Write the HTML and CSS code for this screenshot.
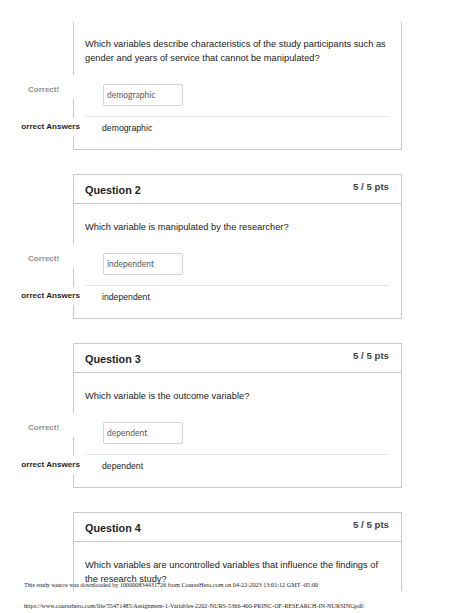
FILE: index.html
```html
<!DOCTYPE html>
<html lang="en">
<head>
  <meta charset="UTF-8" />
  <meta name="viewport" content="width=device-width, initial-scale=1.0" />
  <title>Quiz Results | Assignment 1 Variables</title>
  <link rel="stylesheet" href="styles.css">
</head>
<body>
  <div class="page">
    <div class="sheet">
      <!-- Question 1 (continued from previous page) -->
      <div class="question cont">
        <div class="question-body">
          <p class="question-text">Which variables describe characteristics of the study participants such as gender and years of service that cannot be manipulated?</p>
          <div class="answer">
            <span class="answer-label">Correct!</span>
            <div class="answer-box">demographic</div>
          </div>
          <div class="answer-key">
            <span class="key-label">Correct Answers</span>
            <span class="key-text">demographic</span>
          </div>
        </div>
      </div>

      <!-- Question 2 -->
      <div class="question">
        <div class="question-header">
          <span class="question-name">Question 2</span>
          <span class="question-points">5 / 5 pts</span>
        </div>
        <div class="question-body">
          <p class="question-text">Which variable is manipulated by the researcher?</p>
          <div class="answer">
            <span class="answer-label">Correct!</span>
            <div class="answer-box">independent</div>
          </div>
          <div class="answer-key">
            <span class="key-label">Correct Answers</span>
            <span class="key-text">independent</span>
          </div>
        </div>
      </div>

      <!-- Question 3 -->
      <div class="question">
        <div class="question-header">
          <span class="question-name">Question 3</span>
          <span class="question-points">5 / 5 pts</span>
        </div>
        <div class="question-body">
          <p class="question-text">Which variable is the outcome variable?</p>
          <div class="answer">
            <span class="answer-label">Correct!</span>
            <div class="answer-box">dependent</div>
          </div>
          <div class="answer-key">
            <span class="key-label">Correct Answers</span>
            <span class="key-text">dependent</span>
          </div>
        </div>
      </div>

      <!-- Question 4 (runs onto next page) -->
      <div class="question">
        <div class="question-header">
          <span class="question-name">Question 4</span>
          <span class="question-points">5 / 5 pts</span>
        </div>
        <div class="question-body">
          <p class="question-text">Which variables are uncontrolled variables that influence the findings of the research study?</p>
        </div>
      </div>
    </div>

    <div class="stamp">
      <div class="stamp-line">This study source was downloaded by 100000834431726 from CourseHero.com on 04-22-2023 13:01:12 GMT -05:00</div>
      <div class="stamp-line url">https://www.coursehero.com/file/55471485/Assignment-1-Variables-2202-NURS-5366-400-PRINC-OF-RESEARCH-IN-NURSINGpdf/</div>
    </div>
  </div>
</body>
</html>
```

FILE: styles.css
```css
body {
  margin: 0;
  background-color: white;
  font-family: 'Liberation Sans', Arial, sans-serif;
  color: #222;
}

.page {
  position: relative;
  width: 474px;
  height: 613px;
  overflow: hidden;
}

.sheet {
  margin-left: 21px;
  height: 591px;
  padding-top: 22px;
  box-sizing: border-box;
  overflow: hidden;
}

.question {
  margin-left: 52px;
  width: 329px;
  box-sizing: border-box;
  border: 1px solid #c9c9c9;
  background-color: white;
  margin-top: 24px;
}

.question.cont {
  border-top: none;
  margin-top: 0;
}

.question-header {
  display: flex;
  justify-content: space-between;
  align-items: flex-start;
  height: 29px;
  box-sizing: border-box;
  padding: 8px 12px 0 11px;
  border-bottom: 1px solid #c9c9c9;
}

.question-name {
  font-size: 10.8px;
  font-weight: bold;
  line-height: 14px;
  color: #1f1f1f;
}

.question-points {
  font-size: 9.7px;
  font-weight: bold;
  line-height: 14px;
  margin-top: -3px;
  color: #444;
}

.question-body {
  padding: 16px 12px 14px 11px;
}

.question.cont .question-body {
  padding-top: 15px;
}

.question-text {
  margin: 0;
  font-size: 9.3px;
  line-height: 14px;
  color: #222;
}

.answer {
  position: relative;
  margin-top: 19px;
  padding-left: 18px;
}

.answer-box {
  width: 80px;
  height: 22px;
  box-sizing: border-box;
  border: 1px solid #d4d4d4;
  border-radius: 2px;
  padding-left: 3px;
  font-family: Lato, 'Noto Sans', sans-serif;
  font-size: 8.5px;
  line-height: 20px;
  color: #5a5a5a;
}

.answer-label {
  position: absolute;
  left: -65px;
  top: -9px;
  width: 56px;
  height: 24px;
  box-sizing: border-box;
  padding: 9px 0 0 8px;
  background-color: white;
  font-size: 8px;
  font-weight: bold;
  line-height: 12px;
  color: #909090;
}

.answer-key {
  position: relative;
  margin-top: 10px;
  padding: 4px 0 0 17px;
  border-top: 1px solid #e6e6e6;
  font-size: 8.7px;
  line-height: 14px;
}

.key-text {
  color: #222;
}

.key-label {
  position: absolute;
  left: -85px;
  top: 1px;
  width: 82px;
  height: 18px;
  padding-right: 2px;
  box-sizing: border-box;
  background-color: white;
  text-align: right;
  white-space: nowrap;
  font-size: 8.1px;
  font-weight: bold;
  line-height: 18px;
  color: #1f1f1f;
}

/* download stamp printed over the page */
.stamp {
  position: absolute;
  left: 24px;
  top: 580px;
  font-family: 'Liberation Serif', 'Times New Roman', serif;
  font-size: 6.2px;
  line-height: 9px;
  color: #222;
  white-space: nowrap;
}

.stamp-line.url {
  margin-top: 12px;
}
```
